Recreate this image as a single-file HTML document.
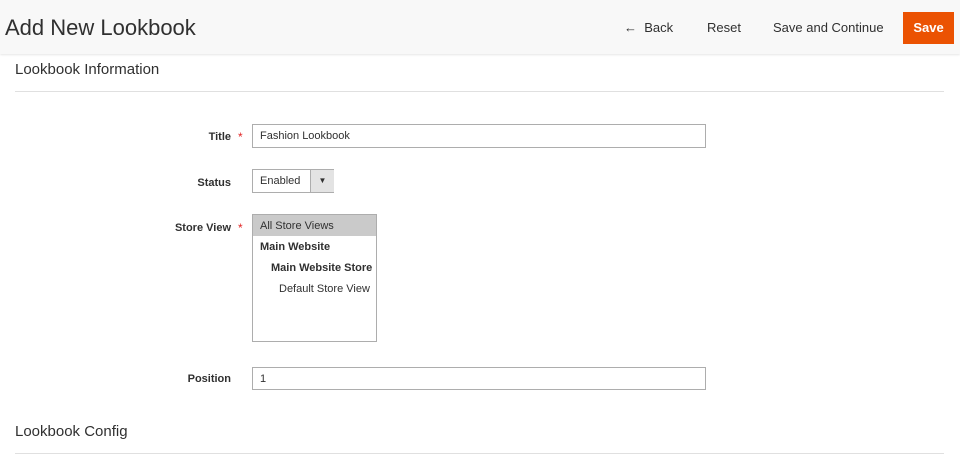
<!DOCTYPE html>
<html><head><style>
body{margin:0;width:960px;height:466px;background:#fff;font-family:"Liberation Sans",sans-serif;color:#303030;position:relative;overflow:hidden}
.a{position:absolute}
.hdr{left:0;top:0;width:960px;height:54px;background:#f8f8f8;box-shadow:0 1px 2px #e6e6e6}
.btn{font-size:13px;color:#303030;top:20px}
.lbl{font-size:11px;font-weight:bold;width:231px;text-align:right;left:0}
.star{color:#e22626;font-size:12px;left:238px}
.in{border:1px solid #adadad;background:#fff;box-sizing:border-box;font-size:11px;padding-left:7px;line-height:23px}
.line{left:15px;width:929px;height:1px;background:#e0e0e0}
</style></head><body>
<div class="a hdr"></div>
<div class="a" style="left:5px;top:15px;font-size:22px;color:#303030">Add New Lookbook</div>
<div class="a btn" style="left:624px">&#8592;&nbsp; Back</div>
<div class="a btn" style="left:707px">Reset</div>
<div class="a btn" style="left:773px">Save and Continue</div>
<div class="a" style="left:903px;top:12px;width:51px;height:32px;background:#eb5202;color:#fff;font-size:13px;font-weight:bold;text-align:center;line-height:32px">Save</div>
<div class="a" style="left:15px;top:61px;font-size:15px">Lookbook Information</div>
<div class="a line" style="top:91px"></div>

<div class="a lbl" style="top:131px">Title</div><div class="a star" style="top:130px">*</div>
<div class="a in" style="left:252px;top:124px;width:454px;height:24px">Fashion Lookbook</div>

<div class="a lbl" style="top:177px">Status</div>
<div class="a in" style="left:252px;top:169px;width:82px;height:24px">Enabled</div>
<div class="a" style="left:310px;top:170px;width:23px;height:22px;background:#e3e3e3;border-left:1px solid #adadad;font-size:8px;text-align:center;line-height:22px">&#9660;</div>

<div class="a lbl" style="top:222px">Store View</div><div class="a star" style="top:221px">*</div>
<div class="a in" style="left:252px;top:214px;width:125px;height:128px;padding:0"></div>
<div class="a" style="left:253px;top:215px;width:123px;height:21px;background:#cacaca"></div>
<div class="a" style="left:260px;top:220px;font-size:11px">All Store Views</div>
<div class="a" style="left:260px;top:241px;font-size:11px;font-weight:bold">Main Website</div>
<div class="a" style="left:271px;top:262px;font-size:11px;font-weight:bold">Main Website Store</div>
<div class="a" style="left:279px;top:283px;font-size:11px">Default Store View</div>

<div class="a lbl" style="top:373px">Position</div>
<div class="a in" style="left:252px;top:367px;width:454px;height:23px">1</div>

<div class="a" style="left:15px;top:423px;font-size:15px">Lookbook Config</div>
<div class="a line" style="top:453px"></div>
</body></html>
